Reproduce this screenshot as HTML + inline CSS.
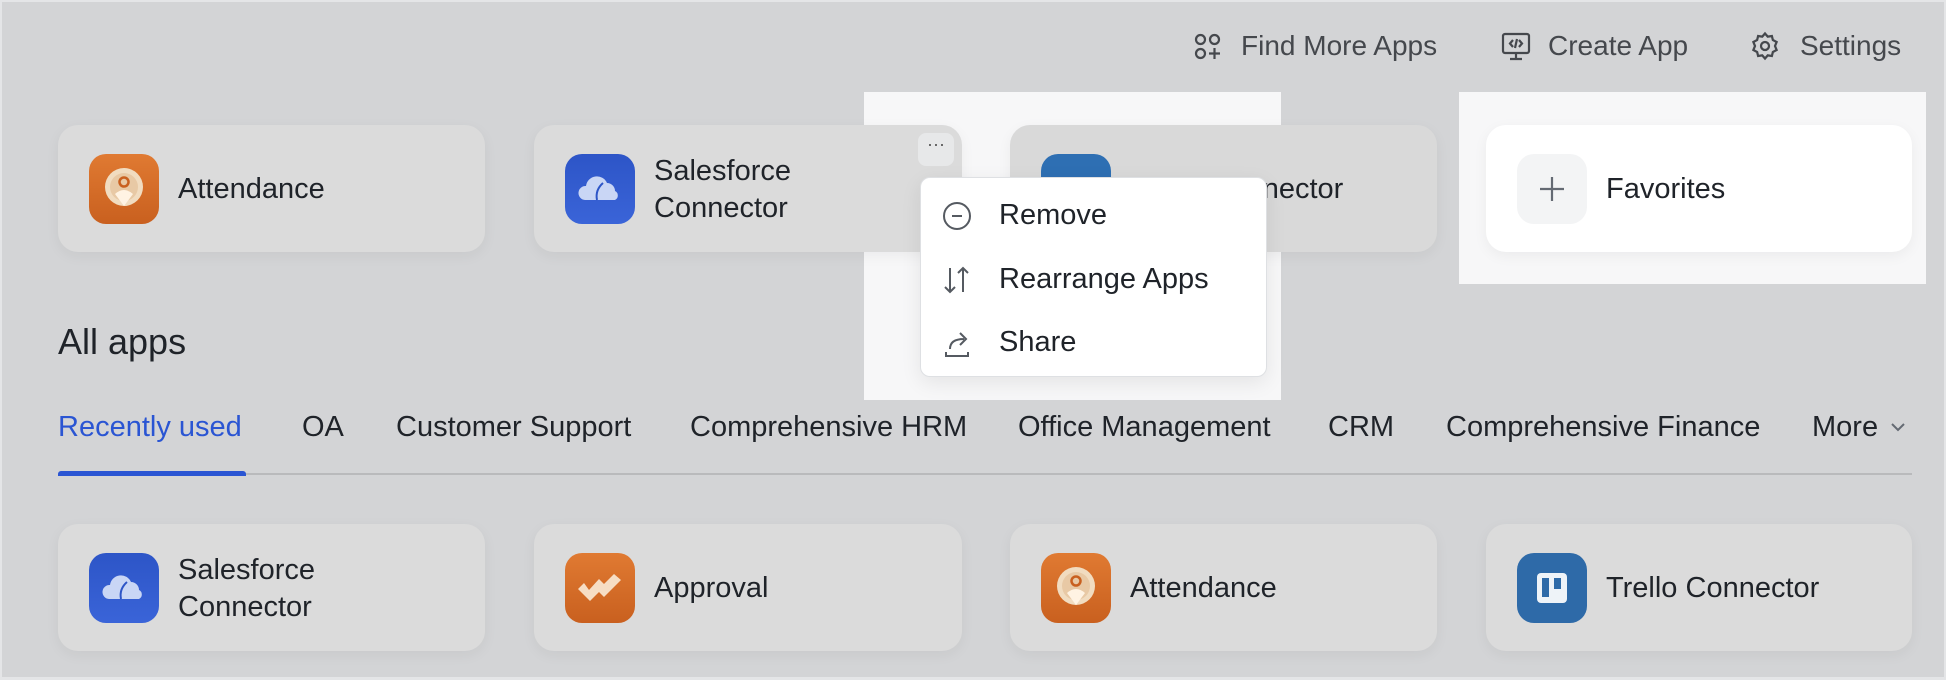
<!DOCTYPE html>
<html><head><meta charset="utf-8"><style>
*{margin:0;padding:0;box-sizing:border-box}
body{width:1946px;height:680px;background:#d3d4d6;font-family:"Liberation Sans",sans-serif;color:#1f2329;position:relative;overflow:hidden}
.frame{position:absolute;left:0;top:0;width:1946px;height:680px;border:2px solid #e4e5e7;border-bottom-width:3px}
.a{position:absolute}
.top{font-size:28px;color:#45484d;top:30px}
.card{position:absolute;height:127px;background:#dbdbdb;border-radius:20px;box-shadow:0 4px 14px rgba(0,0,0,0.05)}
.ic{position:absolute;left:31px;top:29px;width:70px;height:70px;border-radius:17px}
.ct{position:absolute;left:120px;font-size:29px;line-height:37px;color:#1f2329}
.hl{position:absolute;background:#f7f7f8}
.tab{position:absolute;top:411px;font-size:29px;color:#1f2329}
.mi{position:absolute;left:78px;font-size:29px;color:#1f2329}
.orange{background:linear-gradient(#e07a32,#c9601f)}
.blue{background:linear-gradient(#2d55c7,#3a64d8)}
</style></head><body>
<div class="frame"></div>
<svg class="a" style="left:1194px;top:33px" width="28" height="28" viewBox="0 0 28 28" fill="none" stroke="#45484d" stroke-width="2.2"><rect x="2" y="2" width="9" height="9" rx="4.5"/><rect x="16" y="2" width="9" height="9" rx="4.5"/><rect x="2" y="16" width="9" height="9" rx="4.5"/><path d="M20.5 15v11M15 20.5h11"/></svg>
<div class="a top" style="left:1241px">Find More Apps</div>
<svg class="a" style="left:1501px;top:32px" width="30" height="30" viewBox="0 0 30 30" fill="none" stroke="#45484d" stroke-width="2.2"><rect x="2" y="2" width="26" height="19" rx="2"/><path d="M15 21v6M9 27h12M12 8l-3 3.5 3 3.5M18 8l3 3.5-3 3.5M16 7l-2 9"/></svg>
<div class="a top" style="left:1548px">Create App</div>
<svg class="a" style="left:1750px;top:31px" width="30" height="30" viewBox="0 0 24 24" fill="none" stroke="#45484d" stroke-width="1.8"><circle cx="12" cy="12" r="3.2"/><path d="M12 2l2.2 2.5 3.3-.5.8 3.2 3 1.6-1.3 3.2 1.3 3.2-3 1.6-.8 3.2-3.3-.5L12 22l-2.2-2.5-3.3.5-.8-3.2-3-1.6L4 12 2.7 8.8l3-1.6.8-3.2 3.3.5z"/></svg>
<div class="a top" style="left:1800px">Settings</div>

<div class="hl" style="left:864px;top:92px;width:417px;height:308px"></div>
<div class="hl" style="left:1459px;top:92px;width:467px;height:192px"></div>

<div class="card" style="left:58px;top:125px;width:427px"><div class="ic orange"><svg width="70" height="70" viewBox="0 0 70 70"><circle cx="35" cy="33" r="19" fill="#f1dcc0"/><circle cx="35" cy="33" r="14" fill="#e8c9a5"/><circle cx="35" cy="28" r="4.5" fill="none" stroke="#c9601f" stroke-width="2.5"/><path d="M26 40q9-8 18 0l-9 12z" fill="#fff3e3"/></svg></div><div class="ct" style="top:46px">Attendance</div></div>
<div class="card" style="left:534px;top:125px;width:428px"><div class="ic blue"><svg width="70" height="70" viewBox="0 0 70 70"><path d="M20 46a7 7 0 0 1 1-14 11 11 0 0 1 21-3 8 8 0 0 1 8 8 5 5 0 0 1 0 9z" fill="#c9d6f5"/><path d="M32 46q-2-10 6-17" stroke="#2d55c7" stroke-width="2" fill="none"/></svg></div><div class="ct" style="top:28px">Salesforce<br>Connector</div>
<div class="a" style="left:384px;top:8px;width:36px;height:33px;background:#e7e8e9;border-radius:8px;text-align:center;font-size:18px;line-height:22px;color:#555">···</div></div>
<div class="card" style="left:1010px;top:125px;width:427px;background:#d9d9d9"><div class="ic" style="background:#2e6fb3"></div><div class="ct" style="top:46px">Trello Connector</div></div>
<div class="card" style="left:1486px;top:125px;width:426px;background:#fff"><div class="ic" style="background:#f3f4f5"><svg width="70" height="70"><path d="M35 23v24M23 35h24" stroke="#646a73" stroke-width="2.2"/></svg></div><div class="ct" style="top:46px">Favorites</div></div>

<div class="a" style="left:920px;top:177px;width:347px;height:200px;background:#fff;border:1px solid #dee0e3;border-radius:10px;box-shadow:0 6px 20px rgba(0,0,0,0.08)">
<svg class="a" style="left:21px;top:23px" width="30" height="30" viewBox="0 0 30 30" fill="none" stroke="#555a61" stroke-width="2"><circle cx="15" cy="15" r="13"/><path d="M10 15h10"/></svg>
<div class="mi" style="top:21px">Remove</div>
<svg class="a" style="left:21px;top:87px" width="30" height="30" viewBox="0 0 30 30" fill="none" stroke="#555a61" stroke-width="2"><path d="M8 3v24M3 22l5 5 5-5M21 27V3M16 8l5-5 5 5"/></svg>
<div class="mi" style="top:85px">Rearrange Apps</div>
<svg class="a" style="left:21px;top:150px" width="30" height="30" viewBox="0 0 30 30" fill="none" stroke="#555a61" stroke-width="2"><path d="M4 24v4h22v-4M8 21q0-10 14-10M18 5l6 6-6 6"/></svg>
<div class="mi" style="top:148px">Share</div>
</div>

<div class="a" style="left:58px;top:321px;font-size:36px;color:#1f2329">All apps</div>

<div class="tab" style="left:58px;color:#2a55d3">Recently used</div>
<div class="tab" style="left:302px">OA</div>
<div class="tab" style="left:396px">Customer Support</div>
<div class="tab" style="left:690px">Comprehensive HRM</div>
<div class="tab" style="left:1018px">Office Management</div>
<div class="tab" style="left:1328px">CRM</div>
<div class="tab" style="left:1446px">Comprehensive Finance</div>
<div class="tab" style="left:1812px">More</div>
<svg class="a" style="left:1890px;top:420px" width="16" height="14"><path d="M2 4l6 6 6-6" stroke="#646a73" stroke-width="2" fill="none"/></svg>
<div class="a" style="left:58px;top:473px;width:1854px;height:2px;background:#b9babc"></div>
<div class="a" style="left:58px;top:471px;width:188px;height:5px;background:#2a55d3;border-radius:3px 3px 0 0"></div>

<div class="card" style="left:58px;top:524px;width:427px"><div class="ic blue"><svg width="70" height="70" viewBox="0 0 70 70"><path d="M20 46a7 7 0 0 1 1-14 11 11 0 0 1 21-3 8 8 0 0 1 8 8 5 5 0 0 1 0 9z" fill="#c9d6f5"/><path d="M32 46q-2-10 6-17" stroke="#2d55c7" stroke-width="2" fill="none"/></svg></div><div class="ct" style="top:28px">Salesforce<br>Connector</div></div>
<div class="card" style="left:534px;top:524px;width:428px"><div class="ic orange"><svg width="70" height="70"><path d="M13 36l6-6 5 7 10-11 5 5 10-10 7 6-17 17-5-5-9 9z" fill="#f6ddc4"/></svg></div><div class="ct" style="top:46px">Approval</div></div>
<div class="card" style="left:1010px;top:524px;width:427px"><div class="ic orange"><svg width="70" height="70" viewBox="0 0 70 70"><circle cx="35" cy="33" r="19" fill="#f1dcc0"/><circle cx="35" cy="33" r="14" fill="#e8c9a5"/><circle cx="35" cy="28" r="4.5" fill="none" stroke="#c9601f" stroke-width="2.5"/><path d="M26 40q9-8 18 0l-9 12z" fill="#fff3e3"/></svg></div><div class="ct" style="top:46px">Attendance</div></div>
<div class="card" style="left:1486px;top:524px;width:426px"><div class="ic" style="background:#2e6aa8"><svg width="70" height="70"><rect x="20" y="20" width="30" height="30" rx="4" fill="#eef3f8"/><rect x="25" y="25" width="7" height="19" fill="#2e6aa8"/><rect x="37" y="25" width="7" height="11" fill="#2e6aa8"/></svg></div><div class="ct" style="top:46px">Trello Connector</div></div>
</body></html>
